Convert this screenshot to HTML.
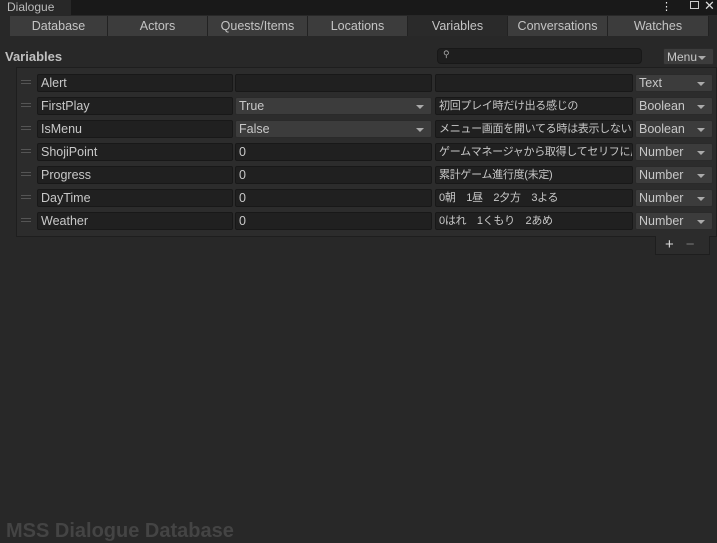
<!DOCTYPE html>
<html><head><meta charset="utf-8"><style>
*{margin:0;padding:0;box-sizing:border-box}
body{width:717px;height:543px;background:#282828;font-family:"Liberation Sans","Noto Sans CJK JP",sans-serif;font-size:12px;color:#c4c4c4;position:relative;overflow:hidden}
.a{position:absolute}
.tb{left:0;top:0;width:717px;height:15px;background:#191919}
.tt{left:0;top:0;width:71px;height:15px;background:#282828;padding-left:7px;line-height:14px;color:#bbb}
.tab{top:16px;height:20px;background:#3c3c3c;border-right:1px solid #222;text-align:center;line-height:20px;color:#c4c4c4;font-size:12.5px}
.sel{background:#2a2a2a}
.box{left:16px;top:67px;width:701px;height:170px;background:#2c2c2c;border:1px solid #1e1e1e}
.f{height:18px;background:#202020;border:1px solid #181818;border-radius:2px;line-height:17px;padding-left:3px;color:#c8c8c8;white-space:nowrap;overflow:hidden;font-size:12.5px}
.d{background:#3c3c3c;border-color:#2a2a2a}
.d:after{content:"";position:absolute;right:7px;top:7px;border-left:4px solid transparent;border-right:4px solid transparent;border-top:4px solid #aaa}
.h{left:21px;width:10px;height:4px;border-top:1px solid #555;border-bottom:1px solid #555}
</style></head><body>
<div class="a tb"></div><div class="a tt">Dialogue</div>
<div class="a" style="left:661px;top:0;color:#eee;font-size:11px">⋮</div>
<div class="a" style="left:690px;top:1px;width:9px;height:8px;border:1px solid #ccc"></div>
<div class="a" style="left:704px;top:-2px;color:#ddd;font-size:13px">✕</div>
<div class="a tab" style="left:10px;width:98px">Database</div>
<div class="a tab" style="left:108px;width:100px">Actors</div>
<div class="a tab" style="left:208px;width:100px">Quests/Items</div>
<div class="a tab" style="left:308px;width:100px">Locations</div>
<div class="a tab sel" style="left:408px;width:100px">Variables</div>
<div class="a tab" style="left:508px;width:100px">Conversations</div>
<div class="a tab" style="left:608px;width:101px">Watches</div>
<div class="a" style="left:5px;top:49px;font-weight:bold;font-size:13px;color:#c0c0c0">Variables</div>
<div class="a" style="left:437px;top:48px;width:205px;height:16px;background:#1e1e1e;border-radius:4px;border:1px solid #181818"><span style="position:absolute;left:5px;top:0px;font-size:9px;color:#aaa">⚲</span></div>
<div class="a f d" style="left:663px;top:48px;width:51px;height:17px;padding-left:3px;font-size:12px;line-height:16px">Menu</div>
<div class="a box"></div>
<div id="rows"></div>
<div class="a" style="left:655px;top:236px;width:55px;height:19px;background:#2c2c2c;border:1px solid #1e1e1e;border-top:none;color:#ddd;font-size:15px;line-height:17px"><span style="margin-left:9px">+</span><span style="margin-left:12px;color:#777">−</span></div>
<div class="a" style="left:6px;top:520px;font-weight:bold;font-size:20px;color:#444">MSS Dialogue Database</div>
<script>
var R=[["Alert","","","Text",0],["FirstPlay","True","初回プレイ時だけ出る感じの","Boolean",1],["IsMenu","False","メニュー画面を開いてる時は表示しない","Boolean",1],["ShojiPoint","0","ゲームマネージャから取得してセリフに反","Number",0],["Progress","0","累計ゲーム進行度(未定)","Number",0],["DayTime","0","0朝　1昼　2夕方　3よる","Number",0],["Weather","0","0はれ　1くもり　2あめ","Number",0]];
var h="";R.forEach(function(r,i){var y=74+i*23;
h+='<div class="a h" style="top:'+(y+6)+'px"></div>';
h+='<div class="a f" style="left:37px;top:'+y+'px;width:196px">'+r[0]+'</div>';
h+='<div class="a f'+(r[4]?' d':'')+'" style="left:235px;top:'+y+'px;width:197px">'+r[1]+'</div>';
h+='<div class="a f" style="left:435px;top:'+y+'px;width:198px;font-size:11px;letter-spacing:-0.3px">'+r[2]+'</div>';
h+='<div class="a f d" style="left:635px;top:'+y+'px;width:78px">'+r[3]+'</div>';});
document.getElementById("rows").innerHTML=h;
</script>
</body></html>
